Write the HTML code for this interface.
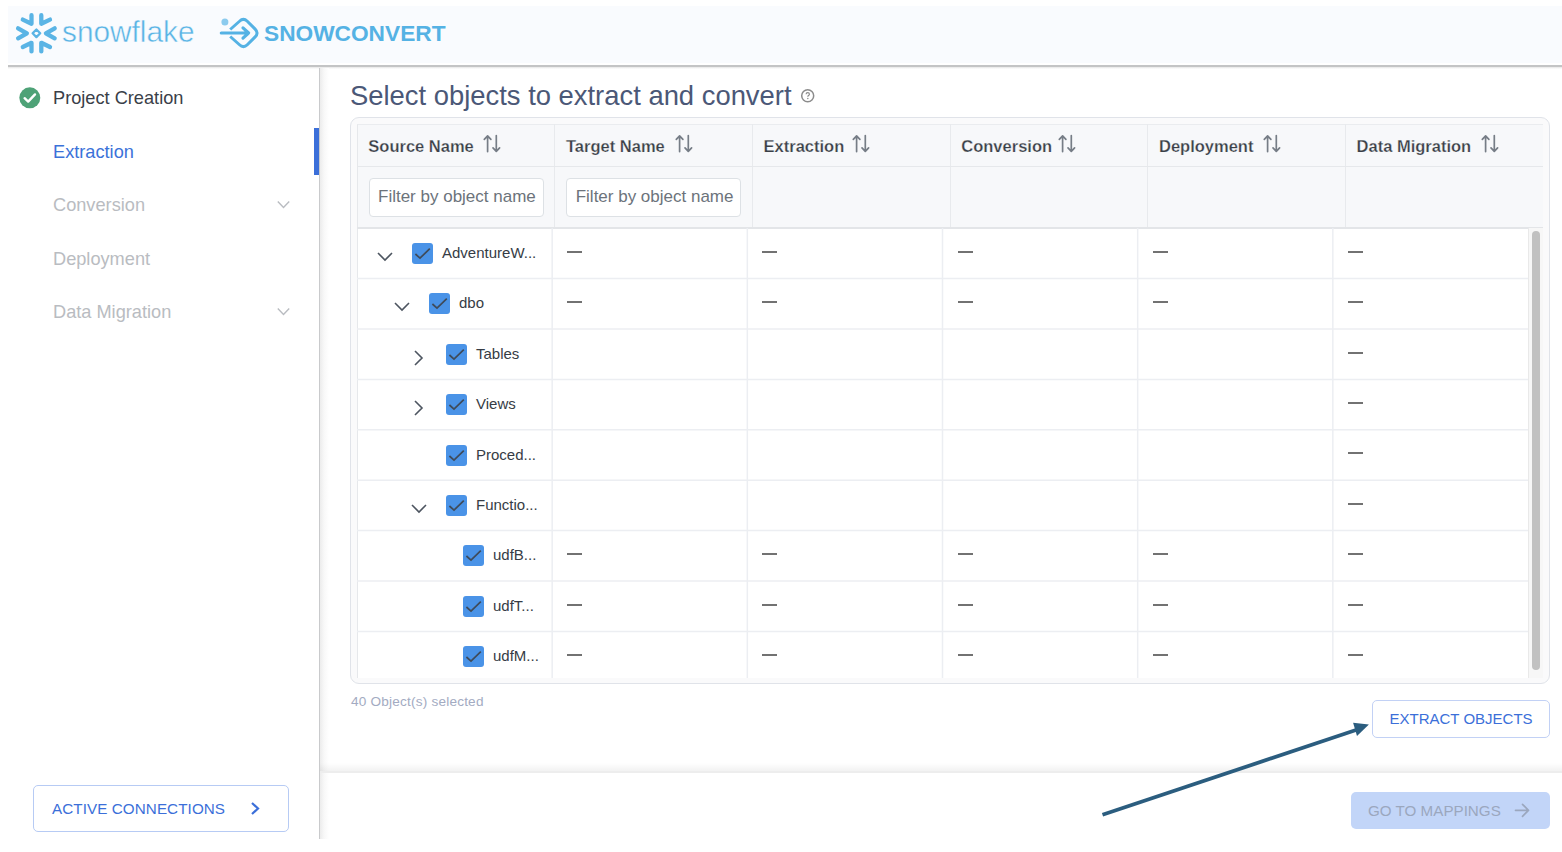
<!DOCTYPE html>
<html><head><meta charset="utf-8">
<style>
*{box-sizing:border-box;margin:0;padding:0}
html,body{width:1562px;height:852px;overflow:hidden;background:#fff;font-family:"Liberation Sans",sans-serif;position:relative}
.abs{position:absolute}
#hdr{left:8px;top:6px;width:1554px;height:57px;background:#f9fbfe}
#hdrline{left:8px;top:64.5px;width:1554px;height:2px;background:#c3c4c5}
#hdrsh{left:8px;top:66.5px;width:1554px;height:2px;background:linear-gradient(#e6e6e6,#fff)}
.logo{color:#5ab4e5}
#sbline{left:318.5px;top:68px;width:1.5px;height:771px;background:#c9cacc}
#sbsh{left:320px;top:68px;width:9px;height:771px;background:linear-gradient(90deg,#ececec,#f8f8f8 45%,#fff)}
.nav{position:absolute;left:53px;font-size:18.2px;white-space:nowrap}
#title{left:350px;top:80px;font-size:27.4px;color:#4b5877;white-space:nowrap}
#tbox{left:350px;top:117px;width:1200px;height:567px;border:1.8px solid #e0e3e9;border-radius:9px;background:#fafafb}
#thead{left:357px;top:124px;width:1186px;height:104px;background:#f7f8fa;border-left:1px solid #e6e8eb;border-top:1px solid #eaecef}
.hcell{position:absolute;top:0;height:104px;border-right:1px solid #e9ebee}
.htext{position:absolute;top:137px;font-size:16.5px;font-weight:700;color:#3a3f47;-webkit-text-stroke:0.25px #f7f8fa;white-space:nowrap}
#tbody{left:357px;top:228px;width:1171px;height:450px;background:#fff;overflow:hidden;border-left:1px solid #e6e8eb}
.dash{position:absolute;width:15px;height:2px;background:#727272}
.cb{position:absolute;width:21px;height:21px;border-radius:3px;background:#4a93e7}
.rtext{position:absolute;font-size:15px;color:#363c45;white-space:nowrap}
.btn{position:absolute;border-radius:5px;white-space:nowrap}
.filt{position:absolute;top:177.5px;width:175px;height:39px;border:1.5px solid #dde1e5;border-radius:4px;background:#fff;font-size:17px;color:#6c737b;padding-left:8.5px;line-height:36px;white-space:nowrap}
.filt span{display:block;width:157px;overflow:hidden}
</style></head><body>
<!-- header -->
<div id="hdr" class="abs"></div>
<div id="hdrline" class="abs"></div>
<div id="hdrsh" class="abs"></div>
<svg class="abs" style="left:0;top:0" width="460" height="66" viewBox="0 0 460 66">
  <g stroke="#5ab4e5" stroke-width="4.3" stroke-linecap="round" stroke-linejoin="round" fill="none">
    <polyline points="31.5,15.2 31.5,23.8 22.8,19.6"/>
    <polyline points="41.3,15.2 41.3,23.8 50,19.6"/>
    <polyline points="31.5,51.4 31.5,42.8 22.8,47"/>
    <polyline points="41.3,51.4 41.3,42.8 50,47"/>
    <polyline points="18.1,28.3 26.9,33.3 18.1,38.3"/>
    <polyline points="54.7,28.3 45.9,33.3 54.7,38.3"/>
    <polygon points="36.4,29.5 40.2,33.3 36.4,37.1 32.6,33.3" stroke-width="2.3"/>
  </g>
  <g stroke="#55b2e4" stroke-width="3" stroke-linejoin="round" fill="none">
    <path d="M230.2,29.5 L239.5,21.25 Q243.4,17.35 247.3,21.25 L255.15,29.1 Q259.05,33 255.15,36.9 L247.3,44.75 Q243.4,48.65 239.5,44.75 L230.2,36.5"/>
  </g>
  <g stroke="#55b2e4" stroke-width="3.2" stroke-linecap="round" stroke-linejoin="round" fill="none">
    <path d="M221.3,33 L248.5,33 M243,27.9 L248.6,33 L243,38.1"/>
  </g>
  <circle cx="224.9" cy="21.9" r="3.5" fill="#8ccbee"/>
</svg>
<div class="abs logo" style="left:62px;top:12px;font-size:29.8px;line-height:40px;white-space:nowrap;-webkit-text-stroke:0.45px #f9fbfe">snowflake</div>
<div class="abs logo" style="left:264px;top:20px;font-size:22.7px;line-height:27px;font-weight:700;white-space:nowrap;color:#55b2e4">SNOWCONVERT</div>

<!-- sidebar -->
<div id="sbline" class="abs"></div>
<div id="sbsh" class="abs"></div>
<svg class="abs" style="left:19px;top:87px" width="22" height="22" viewBox="0 0 22 22">
  <circle cx="10.8" cy="10.8" r="10.5" fill="#4ea277"/>
  <polyline points="5.6,11.2 9.2,14.6 16,7.4" fill="none" stroke="#fff" stroke-width="2.4" stroke-linecap="round" stroke-linejoin="round"/>
</svg>
<div class="nav" style="top:87.5px;color:#3a4048">Project Creation</div>
<div class="nav" style="top:141.5px;color:#3b72d9">Extraction</div>
<div class="abs" style="left:314.2px;top:127.8px;width:4.6px;height:47.5px;background:#3b6fd9"></div>
<div class="nav" style="top:194.5px;color:#b9bcc1">Conversion</div>
<div class="nav" style="top:248.5px;color:#b9bcc1">Deployment</div>
<div class="nav" style="top:301.5px;color:#b9bcc1">Data Migration</div>
<svg class="abs" style="left:276px;top:199px" width="15" height="12"><polyline points="1.8,2.6 7.5,8.4 13.2,2.6" fill="none" stroke="#b9bcc1" stroke-width="1.4"/></svg>
<svg class="abs" style="left:276px;top:306px" width="15" height="12"><polyline points="1.8,2.6 7.5,8.4 13.2,2.6" fill="none" stroke="#b9bcc1" stroke-width="1.4"/></svg>

<div class="btn" style="left:33px;top:785px;width:255.5px;height:46.5px;border:1.6px solid #b7cbf4"></div>
<div class="abs" style="left:52px;top:799.5px;font-size:15.2px;letter-spacing:0.1px;color:#3b6fd9;white-space:nowrap">ACTIVE CONNECTIONS</div>
<svg class="abs" style="left:248px;top:800px" width="14" height="17"><polyline points="4,3 10,8.5 4,14" fill="none" stroke="#3b6fd9" stroke-width="2.2"/></svg>

<!-- main -->
<div id="title" class="abs">Select objects to extract and convert</div>
<svg class="abs" style="left:800px;top:88px" width="16" height="16" viewBox="0 0 16 16">
  <circle cx="7.7" cy="7.7" r="6" fill="none" stroke="#8c8c8c" stroke-width="1.5"/>
  <path d="M6.1,6.3 Q6.1,4.7 7.8,4.7 Q9.4,4.7 9.4,6.2 Q9.4,7.1 8.4,7.6 Q7.8,8 7.8,8.8" fill="none" stroke="#8c8c8c" stroke-width="1.2"/>
  <circle cx="7.8" cy="10.6" r="0.75" fill="#8c8c8c"/>
</svg>

<div id="tbox" class="abs"></div>
<div id="thead" class="abs"></div>
<div id="tbody" class="abs"></div>
<!--TABLE-->
<div class="abs htext" style="left:368.3px">Source Name</div>
<svg class="abs" style="left:482.6px;top:133px" width="18" height="21" viewBox="0 0 18 21"><g fill="none" stroke="#767d86" stroke-width="1.7" stroke-linecap="round" stroke-linejoin="round"><path d="M4.6,3 V18.6 M1.3,6.3 L4.6,2.8 L7.9,6.3"/><path d="M13.3,2.6 V18.2 M10,14.9 L13.3,18.4 L16.6,14.9"/></g></svg>
<div class="abs htext" style="left:566.0px">Target Name</div>
<svg class="abs" style="left:675.1px;top:133px" width="18" height="21" viewBox="0 0 18 21"><g fill="none" stroke="#767d86" stroke-width="1.7" stroke-linecap="round" stroke-linejoin="round"><path d="M4.6,3 V18.6 M1.3,6.3 L4.6,2.8 L7.9,6.3"/><path d="M13.3,2.6 V18.2 M10,14.9 L13.3,18.4 L16.6,14.9"/></g></svg>
<div class="abs htext" style="left:763.6px">Extraction</div>
<svg class="abs" style="left:851.9px;top:133px" width="18" height="21" viewBox="0 0 18 21"><g fill="none" stroke="#767d86" stroke-width="1.7" stroke-linecap="round" stroke-linejoin="round"><path d="M4.6,3 V18.6 M1.3,6.3 L4.6,2.8 L7.9,6.3"/><path d="M13.3,2.6 V18.2 M10,14.9 L13.3,18.4 L16.6,14.9"/></g></svg>
<div class="abs htext" style="left:961.3px">Conversion</div>
<svg class="abs" style="left:1058.4px;top:133px" width="18" height="21" viewBox="0 0 18 21"><g fill="none" stroke="#767d86" stroke-width="1.7" stroke-linecap="round" stroke-linejoin="round"><path d="M4.6,3 V18.6 M1.3,6.3 L4.6,2.8 L7.9,6.3"/><path d="M13.3,2.6 V18.2 M10,14.9 L13.3,18.4 L16.6,14.9"/></g></svg>
<div class="abs htext" style="left:1159.0px">Deployment</div>
<svg class="abs" style="left:1262.8px;top:133px" width="18" height="21" viewBox="0 0 18 21"><g fill="none" stroke="#767d86" stroke-width="1.7" stroke-linecap="round" stroke-linejoin="round"><path d="M4.6,3 V18.6 M1.3,6.3 L4.6,2.8 L7.9,6.3"/><path d="M13.3,2.6 V18.2 M10,14.9 L13.3,18.4 L16.6,14.9"/></g></svg>
<div class="abs htext" style="left:1356.6px">Data Migration</div>
<svg class="abs" style="left:1480.8px;top:133px" width="18" height="21" viewBox="0 0 18 21"><g fill="none" stroke="#767d86" stroke-width="1.7" stroke-linecap="round" stroke-linejoin="round"><path d="M4.6,3 V18.6 M1.3,6.3 L4.6,2.8 L7.9,6.3"/><path d="M13.3,2.6 V18.2 M10,14.9 L13.3,18.4 L16.6,14.9"/></g></svg>
<div class="abs" style="left:554.17px;top:124px;width:1px;height:104px;background:#e8eaed"></div>
<div class="abs" style="left:751.83px;top:124px;width:1px;height:104px;background:#e8eaed"></div>
<div class="abs" style="left:949.50px;top:124px;width:1px;height:104px;background:#e8eaed"></div>
<div class="abs" style="left:1147.17px;top:124px;width:1px;height:104px;background:#e8eaed"></div>
<div class="abs" style="left:1344.83px;top:124px;width:1px;height:104px;background:#e8eaed"></div>
<div class="abs" style="left:357px;top:166px;width:1186px;height:1px;background:#e6e8eb"></div>
<div class="abs" style="left:357px;top:227px;width:1186px;height:1.5px;background:#e3e5e8"></div>
<div class="abs filt" style="left:368.5px">Filter by object name</div>
<div class="abs filt" style="left:566.2px">Filter by object name</div>
<svg class="abs" style="left:357px;top:228px" width="1171" height="450"><g stroke="#eceef2" stroke-width="1.5" fill="none"><path d="M195.17,0 V450"/><path d="M390.33,0 V450"/><path d="M585.50,0 V450"/><path d="M780.67,0 V450"/><path d="M975.83,0 V450"/><path d="M0,50.60 H1171"/><path d="M0,101.00 H1171"/><path d="M0,151.40 H1171"/><path d="M0,201.80 H1171"/><path d="M0,252.20 H1171"/><path d="M0,302.60 H1171"/><path d="M0,353.00 H1171"/><path d="M0,403.40 H1171"/></g></svg>
<div class="abs cb" style="left:412px;top:242.90px"><svg width="21" height="21"><polyline points="3.4,11 8,15.2 17.8,5.6" fill="none" stroke="#3f4b5a" stroke-width="1.7"/></svg></div>
<div class="abs rtext" style="left:442px;top:243.90px">AdventureW...</div>
<svg class="abs" style="left:376px;top:249.80px" width="18" height="14"><polyline points="2,3 9,10 16,3" fill="none" stroke="#4d5560" stroke-width="1.6"/></svg>
<div class="abs dash" style="left:567.2px;top:250.70px"></div>
<div class="abs dash" style="left:762.3px;top:250.70px"></div>
<div class="abs dash" style="left:957.5px;top:250.70px"></div>
<div class="abs dash" style="left:1152.7px;top:250.70px"></div>
<div class="abs dash" style="left:1347.8px;top:250.70px"></div>
<div class="abs cb" style="left:429px;top:293.30px"><svg width="21" height="21"><polyline points="3.4,11 8,15.2 17.8,5.6" fill="none" stroke="#3f4b5a" stroke-width="1.7"/></svg></div>
<div class="abs rtext" style="left:459px;top:294.30px">dbo</div>
<svg class="abs" style="left:393px;top:300.20px" width="18" height="14"><polyline points="2,3 9,10 16,3" fill="none" stroke="#4d5560" stroke-width="1.6"/></svg>
<div class="abs dash" style="left:567.2px;top:301.10px"></div>
<div class="abs dash" style="left:762.3px;top:301.10px"></div>
<div class="abs dash" style="left:957.5px;top:301.10px"></div>
<div class="abs dash" style="left:1152.7px;top:301.10px"></div>
<div class="abs dash" style="left:1347.8px;top:301.10px"></div>
<div class="abs cb" style="left:446px;top:343.70px"><svg width="21" height="21"><polyline points="3.4,11 8,15.2 17.8,5.6" fill="none" stroke="#3f4b5a" stroke-width="1.7"/></svg></div>
<div class="abs rtext" style="left:476px;top:344.70px">Tables</div>
<svg class="abs" style="left:412px;top:349.00px" width="14" height="18"><polyline points="3,2 10,9 3,16" fill="none" stroke="#4d5560" stroke-width="1.6"/></svg>
<div class="abs dash" style="left:1347.8px;top:351.50px"></div>
<div class="abs cb" style="left:446px;top:394.10px"><svg width="21" height="21"><polyline points="3.4,11 8,15.2 17.8,5.6" fill="none" stroke="#3f4b5a" stroke-width="1.7"/></svg></div>
<div class="abs rtext" style="left:476px;top:395.10px">Views</div>
<svg class="abs" style="left:412px;top:399.40px" width="14" height="18"><polyline points="3,2 10,9 3,16" fill="none" stroke="#4d5560" stroke-width="1.6"/></svg>
<div class="abs dash" style="left:1347.8px;top:401.90px"></div>
<div class="abs cb" style="left:446px;top:444.50px"><svg width="21" height="21"><polyline points="3.4,11 8,15.2 17.8,5.6" fill="none" stroke="#3f4b5a" stroke-width="1.7"/></svg></div>
<div class="abs rtext" style="left:476px;top:445.50px">Proced...</div>
<div class="abs dash" style="left:1347.8px;top:452.30px"></div>
<div class="abs cb" style="left:446px;top:494.90px"><svg width="21" height="21"><polyline points="3.4,11 8,15.2 17.8,5.6" fill="none" stroke="#3f4b5a" stroke-width="1.7"/></svg></div>
<div class="abs rtext" style="left:476px;top:495.90px">Functio...</div>
<svg class="abs" style="left:410px;top:501.80px" width="18" height="14"><polyline points="2,3 9,10 16,3" fill="none" stroke="#4d5560" stroke-width="1.6"/></svg>
<div class="abs dash" style="left:1347.8px;top:502.70px"></div>
<div class="abs cb" style="left:463px;top:545.30px"><svg width="21" height="21"><polyline points="3.4,11 8,15.2 17.8,5.6" fill="none" stroke="#3f4b5a" stroke-width="1.7"/></svg></div>
<div class="abs rtext" style="left:493px;top:546.30px">udfB...</div>
<div class="abs dash" style="left:567.2px;top:553.10px"></div>
<div class="abs dash" style="left:762.3px;top:553.10px"></div>
<div class="abs dash" style="left:957.5px;top:553.10px"></div>
<div class="abs dash" style="left:1152.7px;top:553.10px"></div>
<div class="abs dash" style="left:1347.8px;top:553.10px"></div>
<div class="abs cb" style="left:463px;top:595.70px"><svg width="21" height="21"><polyline points="3.4,11 8,15.2 17.8,5.6" fill="none" stroke="#3f4b5a" stroke-width="1.7"/></svg></div>
<div class="abs rtext" style="left:493px;top:596.70px">udfT...</div>
<div class="abs dash" style="left:567.2px;top:603.50px"></div>
<div class="abs dash" style="left:762.3px;top:603.50px"></div>
<div class="abs dash" style="left:957.5px;top:603.50px"></div>
<div class="abs dash" style="left:1152.7px;top:603.50px"></div>
<div class="abs dash" style="left:1347.8px;top:603.50px"></div>
<div class="abs cb" style="left:463px;top:646.10px"><svg width="21" height="21"><polyline points="3.4,11 8,15.2 17.8,5.6" fill="none" stroke="#3f4b5a" stroke-width="1.7"/></svg></div>
<div class="abs rtext" style="left:493px;top:647.10px">udfM...</div>
<div class="abs dash" style="left:567.2px;top:653.90px"></div>
<div class="abs dash" style="left:762.3px;top:653.90px"></div>
<div class="abs dash" style="left:957.5px;top:653.90px"></div>
<div class="abs dash" style="left:1152.7px;top:653.90px"></div>
<div class="abs dash" style="left:1347.8px;top:653.90px"></div>
<div class="abs" style="left:1528px;top:228px;width:15px;height:450px;background:#f7f7f7;border-left:1px solid #e9e9e9"></div>
<div class="abs" style="left:1531.5px;top:231px;width:8.5px;height:439px;border-radius:5px;background:#c1c1c1"></div>
<!--/TABLE-->
<div class="abs" style="left:351px;top:694px;font-size:13.6px;letter-spacing:0.2px;color:#a3abc2;white-space:nowrap">40 Object(s) selected</div>
<div class="btn" style="left:1372px;top:699.5px;width:177.5px;height:38px;border:1.7px solid #c2d1f5;background:#fff"></div>
<div class="abs" style="left:1389.5px;top:710px;font-size:15px;letter-spacing:0;color:#3b6fd9;white-space:nowrap">EXTRACT OBJECTS</div>
<div class="abs" style="left:320px;top:763px;width:1242px;height:8px;background:linear-gradient(rgba(0,0,0,0),rgba(0,0,0,0.05))"></div>
<div class="abs" style="left:320px;top:771px;width:1242px;height:1.5px;background:#ededed"></div>
<div class="btn" style="left:1351px;top:791.5px;width:198.5px;height:37.5px;background:#c2d5f8"></div>
<div class="abs" style="left:1368px;top:802px;font-size:15.2px;letter-spacing:0;color:#9ba7be;white-space:nowrap">GO TO MAPPINGS</div>
<svg class="abs" style="left:1512px;top:801px" width="20" height="19"><g fill="none" stroke="#9ba7be" stroke-width="1.7" stroke-linecap="round" stroke-linejoin="round"><path d="M3.5,9.3 H16.5 M10.5,3.3 L16.5,9.3 L10.5,15.3"/></g></svg>
<svg class="abs" style="left:1090px;top:700px" width="300" height="130" viewBox="0 0 300 130">
  <line x1="12.5" y1="114.8" x2="266" y2="30" stroke="#2b5d7f" stroke-width="3.8"/>
  <polygon points="278.9,24.6 263.1,22.7 267,36.1" fill="#2b5d7f"/>
</svg>
</body></html>
